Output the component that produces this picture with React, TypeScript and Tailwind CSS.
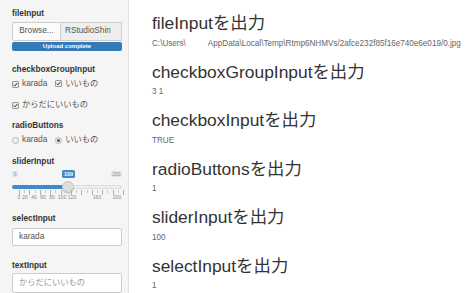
import React from "react";

const FONT = { fontFamily: '"Liberation Sans", "Noto Sans CJK JP", sans-serif' };

function Check() {
  return (
    <span className="inline-flex h-[7px] w-[7px] items-center justify-center rounded-[1px] border border-[#9a9a9a] bg-[#ececec]">
      <svg width="5" height="5" viewBox="0 0 10 10">
        <path d="M1.5 5.2 L4 7.8 L8.7 2" fill="none" stroke="#333" strokeWidth="2" />
      </svg>
    </span>
  );
}

function Radio({ on }: { on?: boolean }) {
  return (
    <span className="inline-flex h-[7px] w-[7px] items-center justify-center rounded-full border border-[#b5b5b5] bg-[#f0f0f0]">
      {on ? <span className="h-[3px] w-[3px] rounded-full bg-[#555]" /> : null}
    </span>
  );
}

const ticks = Array.from({ length: 21 }, (_, i) => i);
const tickLabels: [string, number][] = [
  ["0", 19],
  ["20", 25],
  ["40", 34],
  ["60", 43],
  ["80", 52],
  ["100", 62],
  ["120", 72],
  ["160", 97],
  ["200", 117],
];

function Slider() {
  return (
    <div className="relative mt-[2px] h-[34px] w-[110px]">
      <div className="absolute left-0 top-[2px] h-[6px] rounded-[1px] bg-[#e1e4e9] px-[1.5px] text-[5px] leading-[6px] text-[#999]">0</div>
      <div className="absolute left-[50px] top-[1px] h-[8px] w-[13px] rounded-[1.5px] bg-[#428bca] text-center text-[5.5px] font-bold leading-[8px] text-white">100</div>
      <div className="absolute right-0 top-[2px] h-[6px] rounded-[1px] bg-[#e1e4e9] px-[1.5px] text-[5px] leading-[6px] text-[#999]">200</div>
      <div className="absolute left-0 top-[16px] h-[4px] w-[110px] rounded-full border border-[#dcdcdc] bg-[#eee]" />
      <div className="absolute left-0 top-[16px] h-[4px] w-[56px] rounded-l-full bg-[#428bca]" />
      <div className="absolute left-[50px] top-[12px] h-[12px] w-[12px] rounded-full border border-[#c4c4c4] bg-[#dedede] shadow-[0_1px_1px_rgba(0,0,0,0.15)]" />
      {ticks.map((i) => (
        <div
          key={i}
          className={i % 2 === 0 ? "absolute top-[21px] h-[5px] w-px bg-[#b0b0b0]" : "absolute top-[21px] h-[3px] w-px bg-[#c8c8c8]"}
          style={{ left: `${7 + i * 5.2}px` }}
        />
      ))}
      {tickLabels.map(([t, x]) => (
        <div
          key={t}
          className="absolute top-[25px] w-[16px] text-center text-[5px] leading-[6px] text-[#888]"
          style={{ left: `${x - 12 - 8}px` }}
        >
          {t}
        </div>
      ))}
    </div>
  );
}

function Label({ children, mt }: { children: React.ReactNode; mt: string }) {
  return <div className={`${mt} h-[10px] text-[8.25px] font-bold leading-[10px] text-[#333]`}>{children}</div>;
}

const sections: [string, React.ReactNode][] = [
  [
    "fileInputを出力",
    <span key="p">
      <span>C:\Users\</span>
      <span className="ml-[22px]">AppData\Local\Temp\Rtmp6NHMVs/2afce232f85f16e740e6e019/0.jpg</span>
    </span>,
  ],
  ["checkboxGroupInputを出力", "3 1"],
  ["checkboxInputを出力", "TRUE"],
  ["radioButtonsを出力", "1"],
  ["sliderInputを出力", "100"],
  ["selectInputを出力", "1"],
];

export default function App() {
  return (
    <div className="flex h-[293px] w-[474px] overflow-hidden bg-white" style={FONT}>
      <div className="flex h-full w-[129px] shrink-0 flex-col border-r border-[#e3e3e3] bg-[#f5f5f5] pl-[12px] pr-[7px]">
        <Label mt="mt-[9px]">fileInput</Label>
        <div className="mt-[3px] flex h-[19px] w-[110px]">
          <div className="flex h-full w-[49px] items-center justify-center rounded-l-[2px] border border-[#ccc] bg-[#fbfbfb] text-[8.25px] text-[#555]">
            Browse...
          </div>
          <div className="flex h-full flex-1 items-center overflow-hidden whitespace-nowrap border border-l-0 border-[#ccc] bg-[#eee] pl-[4px] text-[8.25px] text-[#555]">
            RStudioShin
          </div>
        </div>
        <div className="mt-[1px] flex h-[10px] w-[110px] items-center justify-center rounded-[2px] bg-[#337ab7] text-[6px] font-bold text-white">
          Upload complete
        </div>
        <Label mt="mt-[14px]">checkboxGroupInput</Label>
        <div className="mt-[3px] flex h-[12px] items-center text-[8.25px] text-[#555]">
          <Check />
          <span className="ml-[3px]">karada</span>
          <span className="ml-[8px]">
            <Check />
          </span>
          <span className="ml-[3px]">いいもの</span>
        </div>
        <div className="mt-[9px] flex h-[12px] items-center text-[8.25px] text-[#555]">
          <Check />
          <span className="ml-[3px]">からだにいいもの</span>
        </div>
        <Label mt="mt-[10px]">radioButtons</Label>
        <div className="mt-[3px] flex h-[12px] items-center text-[8.25px] text-[#555]">
          <Radio />
          <span className="ml-[3px]">karada</span>
          <span className="ml-[8px] inline-flex">
            <Radio on />
          </span>
          <span className="ml-[3px]">いいもの</span>
        </div>
        <Label mt="mt-[11px]">sliderInput</Label>
        <Slider />
        <Label mt="mt-[12px]">selectInput</Label>
        <div className="mt-[4px] flex h-[18px] w-[110px] items-center rounded-[2px] border border-[#ccc] bg-white pl-[6px] text-[8.25px] text-[#555]">
          karada
        </div>
        <Label mt="mt-[15px]">textInput</Label>
        <div className="mt-[2px] flex h-[20px] w-[110px] shrink-0 items-center rounded-[2px] border border-[#ccc] bg-white pl-[6px] text-[8.25px] text-[#999]">
          からだにいいもの
        </div>
      </div>
      <div className="flex-1 pl-[23px]">
        {sections.map(([h, v]) => (
          <div key={h} className="mt-[13px]">
            <div className="h-[20px] whitespace-nowrap text-[17.4px] leading-[20px] text-[#333]">{h}</div>
            <div className="mt-[5.5px] h-[10px] whitespace-nowrap text-[8.15px] leading-[10px] text-[#666]">{v}</div>
          </div>
        ))}
      </div>
    </div>
  );
}
